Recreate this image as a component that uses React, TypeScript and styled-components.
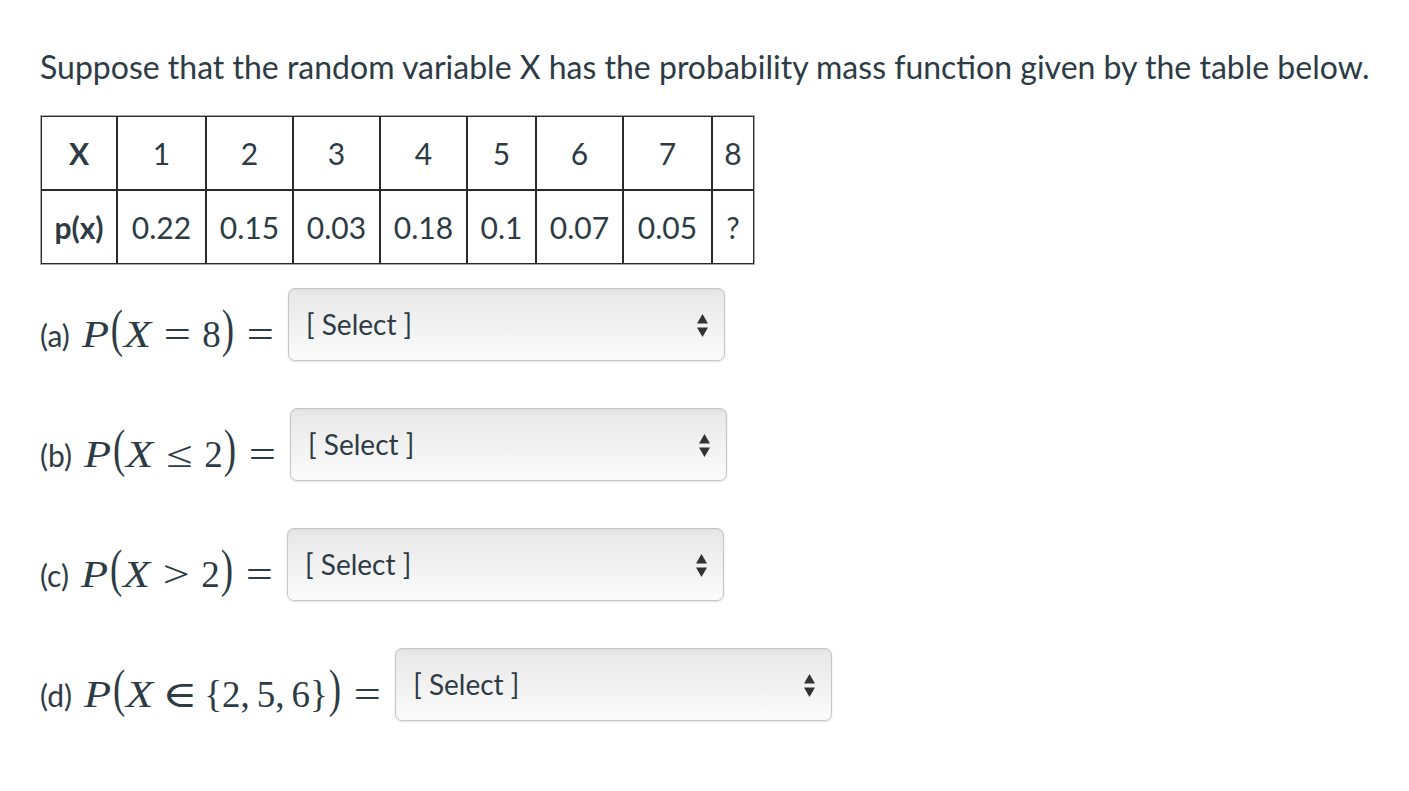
import styled, { createGlobalStyle } from "styled-components";

const GlobalStyle = createGlobalStyle({
  "html, body": {
    margin: 0,
    padding: 0,
    background: "#ffffff",
  },
  body: {
    fontFamily: "Lato, 'Liberation Sans', sans-serif",
    color: "#2d3b45",
  },
});

const Page = styled.div({
  width: "1409px",
  height: "791px",
  boxSizing: "border-box",
  padding: "47px 0 0 40px",
  display: "flex",
  flexDirection: "column",
  alignItems: "flex-start",
});

const Intro = styled.p({
  margin: 0,
  fontSize: "32px",
  lineHeight: "40px",
});

const Table = styled.table({
  marginTop: "28px",
  borderCollapse: "separate",
  borderSpacing: 0,
  border: "1px solid #a8a8a8",
  tableLayout: "fixed",
  fontSize: "30px",
});

const Cell = styled.td<{ $bold?: boolean }>((props) => ({
  border: "1px solid #2b2b2b",
  height: "74px",
  padding: 0,
  textAlign: "center",
  fontWeight: props.$bold ? 700 : 400,
  boxSizing: "border-box",
}));

const Questions = styled.div({
  marginTop: "23px",
  display: "flex",
  flexDirection: "column",
  gap: "47px",
});

const Row = styled.div({
  display: "flex",
  alignItems: "flex-start",
});

const Label = styled.div({
  paddingTop: "25px",
  marginRight: "3px",
  display: "flex",
  alignItems: "baseline",
  whiteSpace: "nowrap",
});

const Part = styled.span({
  fontSize: "30px",
  marginRight: "12px",
});

const Math = styled.span({
  fontFamily: "'Liberation Serif', 'DejaVu Serif', serif",
  fontSize: "37px",
  color: "#2d3b45",
});

const Var = styled.i<{ $advance: number }>((props) => ({
  display: "inline-block",
  fontStyle: "italic",
  width: `${props.$advance}px`,
  transform: "scaleX(1.2)",
  transformOrigin: "left center",
}));

const Paren = styled.span({
  display: "inline-block",
  transform: "translateY(-6px) scaleY(1.4)",
  margin: "0 1px",
});

const Op = styled.span<{ $width?: number }>((props) => ({
  display: "inline-block",
  width: `${props.$width ?? 50}px`,
  textAlign: "center",
}));

const OpGlyph = styled.span({
  display: "inline-block",
  transform: "scaleX(1.3)",
});

const Comma = styled.span({
  marginRight: "7px",
});

const SelectBox = styled.div({
  width: "437px",
  height: "73px",
  boxSizing: "border-box",
  border: "1px solid #c6c6c6",
  borderRadius: "7px",
  background: "linear-gradient(#e7e7e7, #f2f2f2 55%, #fcfcfc)",
  boxShadow: "inset 0 1px 2px rgba(0,0,0,0.06), 0 1px 2px rgba(0,0,0,0.12)",
  display: "flex",
  alignItems: "flex-start",
  justifyContent: "space-between",
  padding: "18px 16px 0 17px",
  fontSize: "28px",
  lineHeight: "34px",
  color: "#2d3b45",
});

const Arrows = styled.svg({
  width: "11px",
  height: "23px",
  marginTop: "7px",
});

const SelectArrows = () => (
  <Arrows viewBox="0 0 11 23">
    <path d="M5.5 0 L11 9.5 L0 9.5 Z" fill="#333" />
    <path d="M0 13.5 L11 13.5 L5.5 23 Z" fill="#333" />
  </Arrows>
);

const Relation = ({ sym }: { sym: string }) => (
  <Op>
    <OpGlyph>{sym}</OpGlyph>
  </Op>
);

const Select = () => (
  <SelectBox>
    [ Select ]
    <SelectArrows />
  </SelectBox>
);

const columns = [76, 89, 87, 87, 87, 69, 87, 89, 42];
const xs = ["1", "2", "3", "4", "5", "6", "7", "8"];
const ps = ["0.22", "0.15", "0.03", "0.18", "0.1", "0.07", "0.05", "?"];

const App = () => {
  return (
    <Page>
      <GlobalStyle />
      <Intro>
        Suppose that the random variable X has the probability mass function given by the table below.
      </Intro>
      <Table>
        <colgroup>
          {columns.map((w, i) => (
            <col key={i} style={{ width: `${w}px` }} />
          ))}
        </colgroup>
        <tbody>
          <tr>
            <Cell $bold>X</Cell>
            {xs.map((x) => (
              <Cell key={x}>{x}</Cell>
            ))}
          </tr>
          <tr>
            <Cell $bold>p(x)</Cell>
            {ps.map((p, i) => (
              <Cell key={i}>{p}</Cell>
            ))}
          </tr>
        </tbody>
      </Table>
      <Questions>
        <Row>
          <Label>
            <Part>(a)</Part>
            <Math>
              <Var $advance={28}>P</Var>
              <Paren>(</Paren>
              <Var $advance={28}>X</Var>
              <Relation sym="=" />8<Paren>)</Paren>
              <Relation sym="=" />
            </Math>
          </Label>
          <Select />
        </Row>
        <Row>
          <Label>
            <Part>(b)</Part>
            <Math>
              <Var $advance={28}>P</Var>
              <Paren>(</Paren>
              <Var $advance={28}>X</Var>
              <Relation sym="≤" />2<Paren>)</Paren>
              <Relation sym="=" />
            </Math>
          </Label>
          <Select />
        </Row>
        <Row>
          <Label>
            <Part>(c)</Part>
            <Math>
              <Var $advance={28}>P</Var>
              <Paren>(</Paren>
              <Var $advance={28}>X</Var>
              <Relation sym=">" />2<Paren>)</Paren>
              <Relation sym="=" />
            </Math>
          </Label>
          <Select />
        </Row>
        <Row>
          <Label>
            <Part>(d)</Part>
            <Math>
              <Var $advance={28}>P</Var>
              <Paren>(</Paren>
              <Var $advance={28}>X</Var>
              <Relation sym="∈" />
              {"{"}2<Comma>,</Comma>5<Comma>,</Comma>6{"}"}
              <Paren>)</Paren>
              <Relation sym="=" />
            </Math>
          </Label>
          <Select />
        </Row>
      </Questions>
    </Page>
  );
};

export default App;
